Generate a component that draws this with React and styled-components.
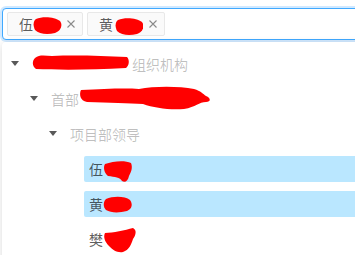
import React from 'react';
import styled, { createGlobalStyle } from 'styled-components';

const GlobalStyle = createGlobalStyle`
  body {
    margin: 0;
    background: #fff;
    font-family: "Noto Sans CJK SC", "Noto Sans", sans-serif;
  }
`;

const Page = styled.div`
  width: 100vw;
  height: 100vh;
  overflow: hidden;
  box-sizing: border-box;
  padding: 8px 0 0 2px;
`;

const Selector = styled.div`
  height: 32px;
  box-sizing: border-box;
  margin-right: -12px;
  border: 1px solid #40a9ff;
  border-radius: 4px;
  box-shadow: 0 0 0 2px rgba(24, 144, 255, 0.2);
  padding: 3px 4px;
  display: flex;
  align-items: center;
  gap: 4px;
  background: #fff;
`;

const Tag = styled.div`
  height: 24px;
  box-sizing: border-box;
  border: 1px solid #e8e8e8;
  background: #fafafa;
  border-radius: 2px;
  padding: 0 7px 0 11px;
  display: flex;
  align-items: center;
  font-size: 14px;
  color: rgba(0, 0, 0, 0.65);
`;

const Close = styled.svg`
  margin-left: ${p => p.$gap}px;
  flex: none;
`;

const Dropdown = styled.div`
  margin-top: 2px;
  margin-right: -12px;
  height: 240px;
  background: #fff;
  box-shadow: 0 2px 8px rgba(0, 0, 0, 0.15);
  border-radius: 4px;
  padding-top: 4px;
`;

const Row = styled.div`
  height: 35px;
  display: flex;
  align-items: center;
  padding-left: ${p => 1 + p.$level * 19}px;
`;

const Switcher = styled.span`
  width: 24px;
  height: 24px;
  flex: none;
  display: flex;
  align-items: center;
  justify-content: center;
`;

const Node = styled.span`
  flex: 1;
  height: 26px;
  padding: 0 5px;
  display: flex;
  align-items: center;
  font-size: 14px;
  white-space: nowrap;
  border-radius: 2px;
  color: ${p => (p.$disabled ? 'rgba(0, 0, 0, 0.25)' : 'rgba(0, 0, 0, 0.65)')};
  background: ${p => (p.$selected ? '#bae7ff' : 'transparent')};
`;

const Blot = styled.svg`
  flex: none;
  margin-left: ${p => p.$ml || 0}px;
  margin-right: ${p => p.$mr || 0}px;
  margin-top: ${p => p.$mt || 0}px;
`;

const Scribble = ({ w, h, d, ml, mr, mt }) => (
  <Blot width={w} height={h} viewBox={`0 0 ${w} ${h}`} $ml={ml} $mr={mr} $mt={mt}>
    <path d={d} fill="#ff0000" />
  </Blot>
);

const Caret = () => (
  <svg width="8" height="5" viewBox="0 0 8 5">
    <polygon points="0,0 8,0 4,5" fill="#595959" />
  </svg>
);

const CloseIcon = ({ gap }) => (
  <Close width="8" height="8" viewBox="0 0 8 8" $gap={gap}>
    <path d="M0.5 0.5 L7.5 7.5 M7.5 0.5 L0.5 7.5" stroke="rgba(0,0,0,0.45)" strokeWidth="1.1" />
  </Close>
);

const tagBlot = 'M3,3 C10,0 22,1 27,5 C30,9 28,15 22,17 C14,19 6,18 2,14 C0,10 0,5 3,3 Z';

const App = () => (
  <Page>
    <GlobalStyle />
    <Selector>
      <Tag>
        伍
        <Scribble w={29} h={19} d={tagBlot} ml={0} mt={2} />
        <CloseIcon gap={5} />
      </Tag>
      <Tag>
        黄
        <Scribble w={28} h={19} d={tagBlot} ml={2} mt={4} />
        <CloseIcon gap={6} />
      </Tag>
    </Selector>
    <Dropdown>
      <Row $level={0}>
        <Switcher><Caret /></Switcher>
        <Node $disabled>
          <Scribble
            w={98}
            h={17}
            mt={-2}
            mr={2}
            d="M3,4 C8,0 14,2 20,2 C45,1 70,2 95,3 C98,6 97,12 94,14 C60,16 25,16 4,15 C0,12 0,7 3,4 Z"
          />
          组织机构
        </Node>
      </Row>
      <Row $level={1}>
        <Switcher><Caret /></Switcher>
        <Node $disabled>
          首部
          <Scribble
            w={132}
            h={24}
            mt={-2}
            d="M2,4 C25,3 45,2 60,3 C75,0 100,0 115,3 C122,5 124,8 127,10 C132,12 132,16 127,16 C120,16 117,21 105,23 C90,24 75,22 64,18 C50,17 30,17 8,16 C1,15 0,8 2,4 Z"
          />
        </Node>
      </Row>
      <Row $level={2}>
        <Switcher><Caret /></Switcher>
        <Node $disabled>项目部领导</Node>
      </Row>
      <Row $level={3}>
        <Switcher />
        <Node $selected>
          伍
          <Scribble
            w={30}
            h={23}
            mt={6}
            d="M2,4 C10,1 22,0 28,3 C30,8 28,12 26,16 C25,21 22,23 19,21 C17,17 12,17 5,16 C1,13 0,7 2,4 Z"
          />
        </Node>
      </Row>
      <Row $level={3}>
        <Switcher />
        <Node $selected>
          黄
          <Scribble
            w={30}
            h={17}
            mt={2}
            d="M3,3 C10,0 22,0 27,4 C30,8 29,13 24,15 C16,17 8,17 3,14 C0,11 0,6 3,3 Z"
          />
        </Node>
      </Row>
      <Row $level={3}>
        <Switcher />
        <Node>
          樊
          <Scribble
            w={34}
            h={25}
            mt={4}
            d="M2,5 C10,5 22,2 30,0 C34,2 33,7 30,11 C28,17 26,22 20,24 C14,25 10,22 6,18 C2,14 0,9 2,5 Z"
          />
        </Node>
      </Row>
    </Dropdown>
  </Page>
);

export default App;
